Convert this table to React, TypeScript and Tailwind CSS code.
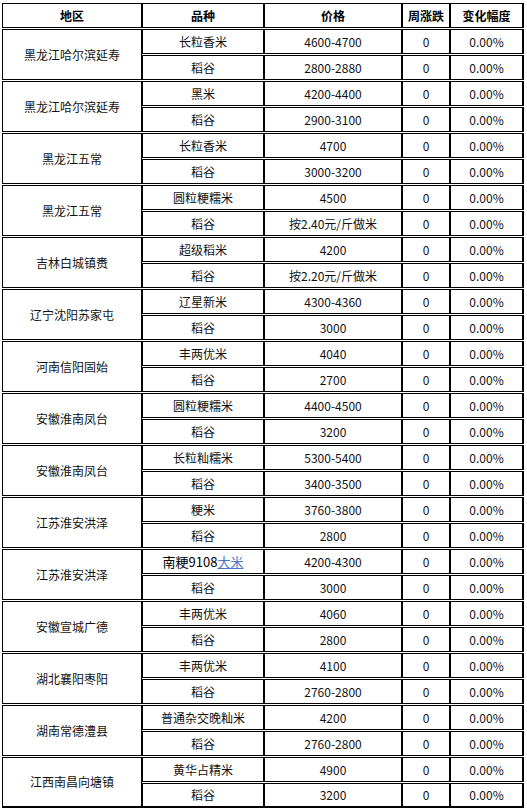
import React from 'react';

type Item = { name: React.ReactNode; price: string };
type Group = { region: string; items: Item[] };

const groups: Group[] = [
  { region: '黑龙江哈尔滨延寿', items: [{ name: '长粒香米', price: '4600-4700' }, { name: '稻谷', price: '2800-2880' }] },
  { region: '黑龙江哈尔滨延寿', items: [{ name: '黑米', price: '4200-4400' }, { name: '稻谷', price: '2900-3100' }] },
  { region: '黑龙江五常', items: [{ name: '长粒香米', price: '4700' }, { name: '稻谷', price: '3000-3200' }] },
  { region: '黑龙江五常', items: [{ name: '圆粒粳糯米', price: '4500' }, { name: '稻谷', price: '按2.40元/斤做米' }] },
  { region: '吉林白城镇赉', items: [{ name: '超级稻米', price: '4200' }, { name: '稻谷', price: '按2.20元/斤做米' }] },
  { region: '辽宁沈阳苏家屯', items: [{ name: '辽星新米', price: '4300-4360' }, { name: '稻谷', price: '3000' }] },
  { region: '河南信阳固始', items: [{ name: '丰两优米', price: '4040' }, { name: '稻谷', price: '2700' }] },
  { region: '安徽淮南凤台', items: [{ name: '圆粒粳糯米', price: '4400-4500' }, { name: '稻谷', price: '3200' }] },
  { region: '安徽淮南凤台', items: [{ name: '长粒籼糯米', price: '5300-5400' }, { name: '稻谷', price: '3400-3500' }] },
  { region: '江苏淮安洪泽', items: [{ name: '粳米', price: '3760-3800' }, { name: '稻谷', price: '2800' }] },
  {
    region: '江苏淮安洪泽',
    items: [
      {
        name: (
          <span className="text-[13px] text-black">
            南粳9108<span className="text-[#4a74c4] underline">大米</span>
          </span>
        ),
        price: '4200-4300',
      },
      { name: '稻谷', price: '3000' },
    ],
  },
  { region: '安徽宣城广德', items: [{ name: '丰两优米', price: '4060' }, { name: '稻谷', price: '2800' }] },
  { region: '湖北襄阳枣阳', items: [{ name: '丰两优米', price: '4100' }, { name: '稻谷', price: '2760-2800' }] },
  { region: '湖南常德澧县', items: [{ name: '普通杂交晚籼米', price: '4200' }, { name: '稻谷', price: '2760-2800' }] },
  { region: '江西南昌向塘镇', items: [{ name: '黄华占精米', price: '4900' }, { name: '稻谷', price: '3200' }] },
];

const cell = 'border border-black h-[25px] p-0 text-center align-middle';

export default function App() {
  const lastGroup = groups.length - 1;
  return (
    <div
      className="bg-white pl-[2px] pt-[2px] text-[12px] leading-none text-[#111]"
      style={{ fontFamily: '"Microsoft YaHei", "Noto Sans CJK SC", "Noto Sans", sans-serif' }}
    >
      <table className="table-fixed border-separate border-spacing-x-0 border-spacing-y-[1px] w-[522px]">
        <colgroup>
          <col className="w-[140px]" />
          <col className="w-[122px]" />
          <col className="w-[138px]" />
          <col className="w-[48px]" />
          <col className="w-[74px]" />
        </colgroup>
        <thead>
          <tr>
            <th className={`${cell} font-bold text-black`}>地区</th>
            <th className={`${cell} font-bold text-black`}>品种</th>
            <th className={`${cell} font-bold text-black`}>价格</th>
            <th className={`${cell} font-bold text-black`}>周涨跌</th>
            <th className={`${cell} font-bold text-black border-r-2`}>变化幅度</th>
          </tr>
        </thead>
        <tbody>
          {groups.map((g, gi) =>
            g.items.map((it, ii) => {
              const last = gi === lastGroup && ii === g.items.length - 1;
              const bb = last ? ' border-b-2' : '';
              return (
                <tr key={`${gi}-${ii}`}>
                  {ii === 0 && (
                    <td rowSpan={g.items.length} className={`${cell}${gi === lastGroup ? ' border-b-2' : ''}`}>
                      {g.region}
                    </td>
                  )}
                  <td className={cell + bb}>{it.name}</td>
                  <td className={cell + bb}>{it.price}</td>
                  <td className={cell + bb}>0</td>
                  <td className={`${cell}${bb} border-r-2`}>0.00%</td>
                </tr>
              );
            })
          )}
        </tbody>
      </table>
    </div>
  );
}
